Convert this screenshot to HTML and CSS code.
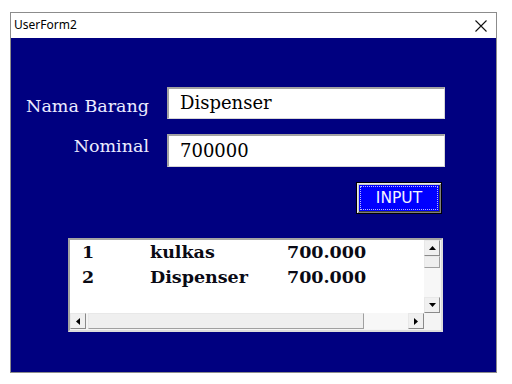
FILE: index.html
```html
<!DOCTYPE html>
<html>
<head>
<meta charset="utf-8">
<link rel="stylesheet" href="styles.css">
</head>
<body>
<div class="window">
  <div class="titlebar">
    <span class="title">UserForm2</span>
    <svg class="close" width="12" height="12" viewBox="0 0 12 12"><path d="M0.5 0.5 L11.5 11.5 M11.5 0.5 L0.5 11.5" stroke="#111" stroke-width="1.1" fill="none"/></svg>
  </div>
  <div class="formbody">
    <div class="fields">
      <div class="label l1">Nama Barang</div>
      <div class="textbox">Dispenser</div>
      <div class="label l2">Nominal</div>
      <div class="textbox tb2">700000</div>
    </div>
    <div class="btnrow">
      <div class="button"><div class="focus">INPUT</div></div>
    </div>
    <div class="listbox">
      <div class="listarea">
        <div class="row"><span class="c1">1</span><span class="c2">kulkas</span><span class="c3">700.000</span></div>
        <div class="row"><span class="c1">2</span><span class="c2">Dispenser</span><span class="c3">700.000</span></div>
      </div>
      <div class="vscroll">
        <div class="sbtn"><svg width="7" height="4" viewBox="0 0 7 4"><path d="M3.5 0 L7 4 L0 4 Z" fill="#000"/></svg></div>
        <div class="vthumb"></div>
        <div class="vtrack"></div>
        <div class="sbtn"><svg width="7" height="4" viewBox="0 0 7 4"><path d="M0 0 L7 0 L3.5 4 Z" fill="#000"/></svg></div>
      </div>
      <div class="hscroll">
        <div class="sbtn"><svg width="4" height="7" viewBox="0 0 4 7"><path d="M4 0 L4 7 L0 3.5 Z" fill="#000"/></svg></div>
        <div class="hthumb"></div>
        <div class="htrack"></div>
        <div class="sbtn"><svg width="4" height="7" viewBox="0 0 4 7"><path d="M0 0 L4 3.5 L0 7 Z" fill="#000"/></svg></div>
      </div>
      <div class="corner"></div>
    </div>
  </div>
</div>
</body>
</html>
```
FILE: styles.css
```css
html, body {
  margin: 0;
  padding: 0;
  background: #ffffff;
}
.window {
  margin: 12px 0 0 10px;
  width: 487px;
  border: 1px solid #8c8c8c;
  box-sizing: border-box;
}
.titlebar {
  height: 25px;
  background: #ffffff;
  display: flex;
  align-items: center;
  justify-content: space-between;
  padding: 0 9px 0 3px;
}
.title {
  font-family: "Noto Sans", sans-serif;
  font-size: 12px;
  color: #000;
  line-height: 14px;
  margin-top: -1px;
}
.close {
  display: block;
  margin-top: 1px;
}
.formbody {
  height: 334px;
  background: #000080;
  padding-top: 49px;
  box-sizing: border-box;
}
.fields {
  display: grid;
  grid-template-columns: 138px 278px;
  grid-template-rows: 32px 33px;
  column-gap: 18px;
  row-gap: 15px;
}
.label {
  font-family: "DejaVu Serif", serif;
  font-size: 17.5px;
  line-height: 21px;
  color: #ececff;
  text-align: right;
  white-space: nowrap;
}
.l1 { padding-top: 9px; }
.l2 { padding-top: 2px; }
.textbox {
  background: #ffffff;
  border-top: 2px solid #a3a3a3;
  border-left: 2px solid #a3a3a3;
  border-right: 1px solid #d6d6d6;
  border-bottom: 1px solid #d6d6d6;
  box-sizing: border-box;
  font-family: "DejaVu Serif", serif;
  font-size: 18px;
  line-height: 21px;
  color: #000;
  padding: 3px 0 0 11px;
}
.tb2 { padding-top: 4px; }
.btnrow {
  width: 434px;
  display: flex;
  justify-content: flex-end;
  margin-top: 15px;
}
.button {
  width: 86px;
  height: 32px;
  margin-right: 3px;
  box-sizing: border-box;
  border: 1px solid #000;
  background: #0000ff;
  box-shadow: inset 1px 1px 0 #e8e8e8, inset -1px -1px 0 #808080, inset 2px 2px 0 #c8c8c8, inset -2px -2px 0 #404040;
  padding: 3px;
}
.focus {
  height: 100%;
  box-sizing: border-box;
  border: 1px dotted #b8b8ff;
  font-family: "DejaVu Sans", sans-serif;
  font-size: 15.5px;
  line-height: 22px;
  color: #f4f4ff;
  text-align: center;
}
.listbox {
  margin: 24px 0 0 57px;
  width: 375px;
  height: 94px;
  box-sizing: border-box;
  background: #ffffff;
  border-top: 2px solid #a3a3a3;
  border-left: 2px solid #a3a3a3;
  border-right: 2px solid #dcdcdc;
  border-bottom: 2px solid #dcdcdc;
  display: grid;
  grid-template-columns: 1fr 17px;
  grid-template-rows: 1fr 17px;
}
.listarea {
  padding-left: 12px;
  overflow: hidden;
}
.row {
  display: flex;
  font-family: "DejaVu Serif", serif;
  font-weight: bold;
  font-size: 17.5px;
  line-height: 25px;
  color: #0a0a14;
  white-space: nowrap;
}
.c1 { width: 68px; }
.c2 { width: 137px; }
.vscroll {
  display: flex;
  flex-direction: column;
  padding-right: 1px;
  background: #f4f4f4;
}
.hscroll {
  display: flex;
  padding-bottom: 1px;
  background: #f4f4f4;
}
.sbtn {
  width: 16px;
  height: 16px;
  flex: none;
  box-sizing: border-box;
  background: #f0f0f0;
  border-top: 1px solid #e8e8e8;
  border-left: 1px solid #e8e8e8;
  border-right: 1px solid #8a8a8a;
  border-bottom: 1px solid #8a8a8a;
  display: flex;
  align-items: center;
  justify-content: center;
}
.vthumb {
  height: 12px;
  flex: none;
  box-sizing: border-box;
  background: #efefef;
  border: 1px solid #a0a0a0;
  border-top-color: #e8e8e8;
  border-left-color: #e8e8e8;
}
.vtrack { flex: 1; background: #f7f7f7; }
.hthumb {
  width: 276px;
  flex: none;
  margin-left: 2px;
  box-sizing: border-box;
  background: #efefef;
  border: 1px solid #a0a0a0;
  border-top-color: #e8e8e8;
  border-left-color: #e8e8e8;
}
.htrack { flex: 1; background: #f7f7f7; }
.corner { background: #f4f4f4; }
```
